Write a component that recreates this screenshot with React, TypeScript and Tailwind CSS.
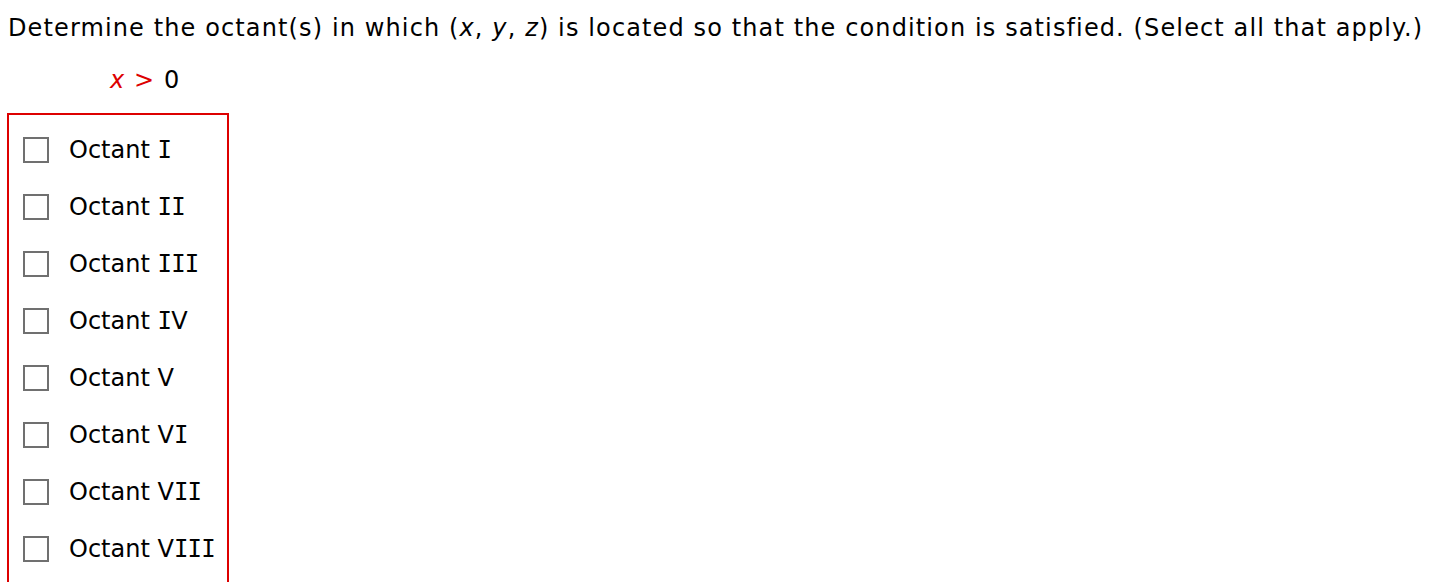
import React from 'react';

const octants = ['I', 'II', 'III', 'IV', 'V', 'VI', 'VII', 'VIII'];

// Verdana-style serifed capital I, borrowed from the mono face
const Numeral: React.FC<{ value: string }> = ({ value }) => (
  <>
    {value.split('').map((ch, i) =>
      ch === 'I' ? (
        <span key={i} className="font-['DejaVu_Sans_Mono',monospace] tracking-[-0.75px]">
          I
        </span>
      ) : (
        <span key={i}>{ch}</span>
      )
    )}
  </>
);

const App: React.FC = () => {
  return (
    <div className="min-h-screen bg-white text-black font-['DejaVu_Sans',Verdana,sans-serif] text-[24px] pl-[8px] pt-[9px]">
      <p className="leading-[38px] whitespace-nowrap tracking-[1.12px]">
        Determine the octant(s) in which (<i>x</i>, <i>y</i>, <i>z</i>) is located so that the condition is satisfied. (Select all that apply.)
      </p>

      <p className="mt-[14px] pl-[102px] leading-[38px] whitespace-nowrap tracking-[1.12px]">
        <span className="text-[#dd0000]">
          <i>x</i>&nbsp;&gt;&nbsp;
        </span>
        0
      </p>

      <div className="mt-[14px] -ml-[1px] w-[222px] border-2 border-[#dd0000] pt-[6px] pb-[20px] pl-[14px]">
        {octants.map((o) => (
          <label key={o} className="flex h-[57px] items-center gap-[20px]">
            <span className="block h-[26px] w-[26px] shrink-0 border-2 border-[#707070] bg-white" />
            <span className="leading-none whitespace-nowrap">
              Octant <Numeral value={o} />
            </span>
          </label>
        ))}
      </div>
    </div>
  );
};

export default App;
